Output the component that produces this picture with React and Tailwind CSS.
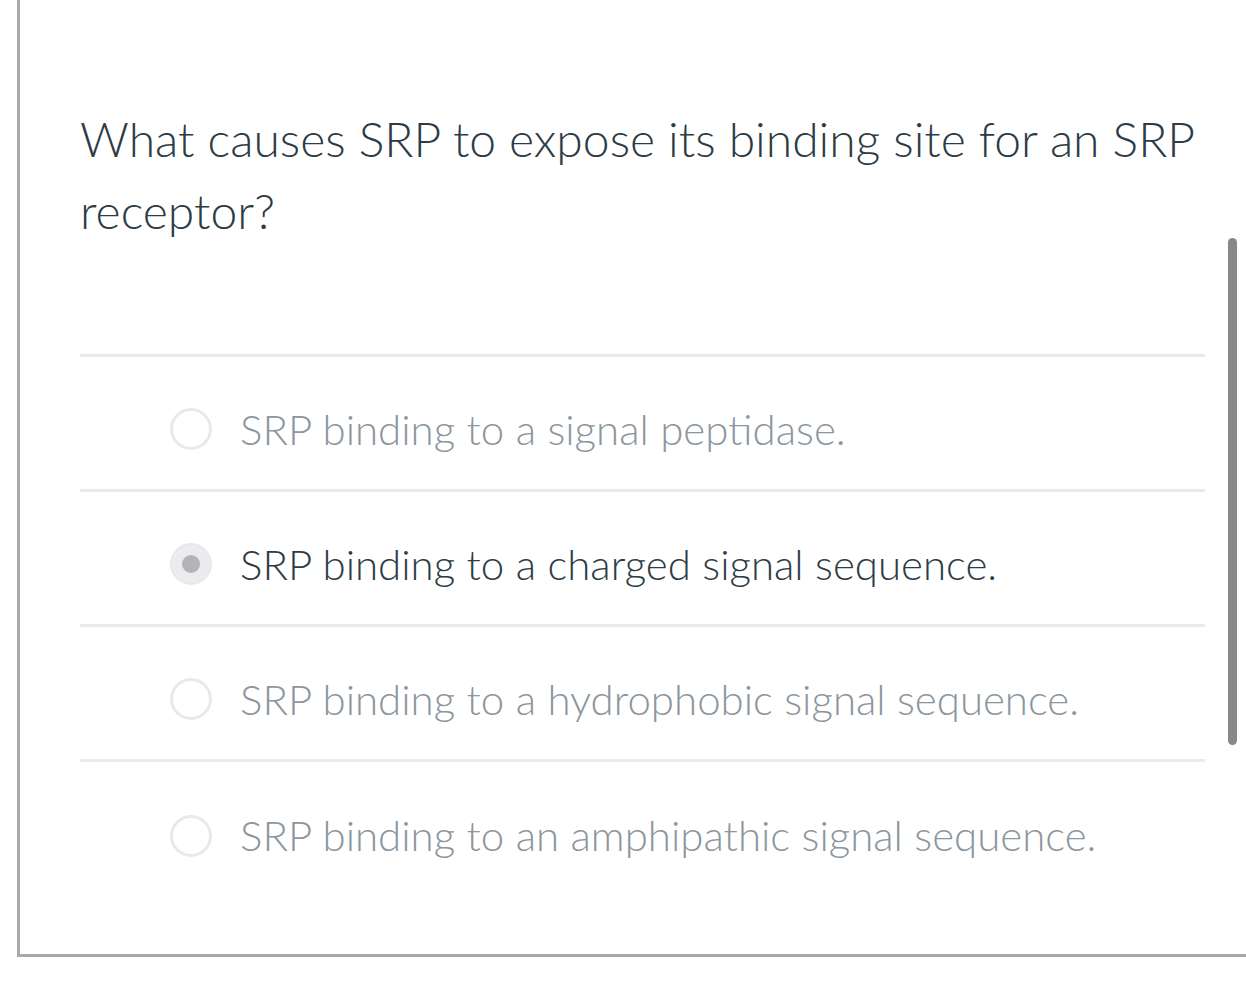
import React from 'react';

const options = [
  { text: 'SRP binding to a signal peptidase.', selected: false },
  { text: 'SRP binding to a charged signal sequence.', selected: true },
  { text: 'SRP binding to a hydrophobic signal sequence.', selected: false },
  { text: 'SRP binding to an amphipathic signal sequence.', selected: false },
];

const Radio = ({ selected }) => (
  <span className="flex h-[42px] w-[42px] shrink-0 items-center justify-center rounded-full border-[3px] border-[#e8e9eb] bg-white">
    {selected && (
      <span className="flex h-full w-full items-center justify-center rounded-full bg-[#ececee]">
        <span className="h-[18px] w-[18px] rounded-full bg-[#b3b3b8]" />
      </span>
    )}
  </span>
);

export default function App() {
  return (
    <div className="relative h-[993px] w-[1246px] bg-white" style={{ fontFamily: 'Lato, "Open Sans", sans-serif' }}>
      <div className="ml-[17px] h-[957px] border-b-[3px] border-l-[3px] border-[#a9a9a9] pl-[60px] pr-[41px]">
        <h1 className="pt-[103px] text-[48px] font-light leading-[72px] text-[#2d3b45]">
          What causes SRP to expose its binding site for an SRP receptor?
        </h1>

        <div className="mt-[107px] border-t-[3px] border-[#eaeaea]">
          {options.map((opt, i) => (
            <div
              key={i}
              className={`flex h-[135px] items-center gap-[28px] pl-[90px] pt-[12px] ${
                i < options.length - 1 ? 'border-b-[3px] border-[#eaeaea]' : ''
              }`}
            >
              <Radio selected={opt.selected} />
              <span
                className={`text-[42px] font-light ${
                  opt.selected ? 'text-[#2d3b45]' : 'text-[#8b969e]'
                }`}
              >
                {opt.text}
              </span>
            </div>
          ))}
        </div>
      </div>

      {/* scrollbar */}
      <div className="absolute left-[1228px] top-[238px] h-[507px] w-[9px] rounded-full bg-[#888888]" />
    </div>
  );
}
